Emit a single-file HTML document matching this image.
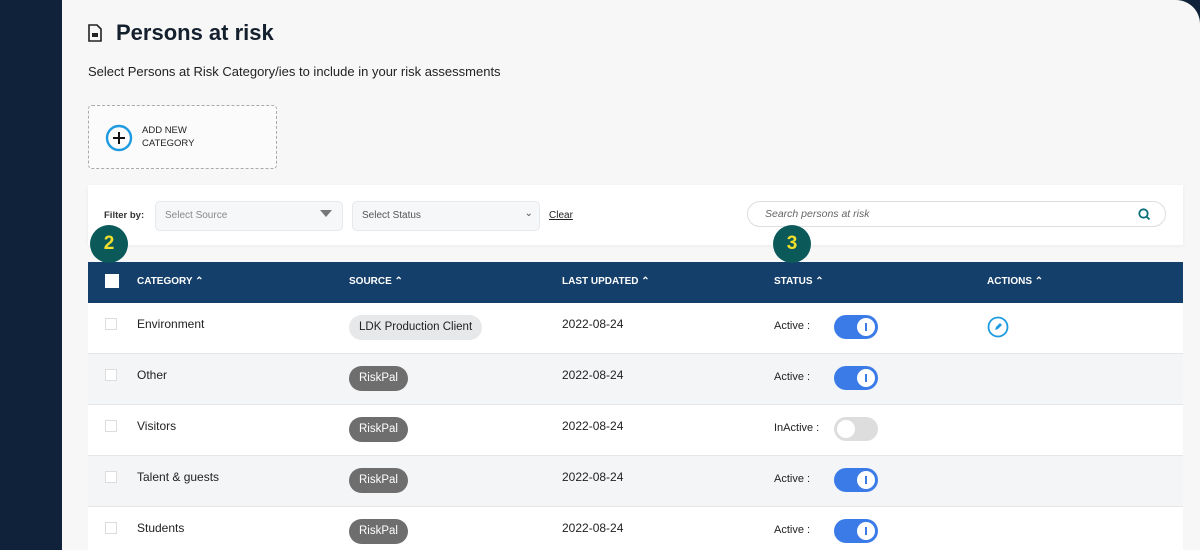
<!DOCTYPE html>
<html style="overflow:hidden;height:550px"><head><style>
*{box-sizing:border-box;margin:0;padding:0}
html,body{width:1200px;height:550px;overflow:hidden}
body{background:#0f2239;font-family:"Liberation Sans",sans-serif;position:relative}
.main{position:absolute;left:62px;top:0;width:1138px;height:550px;background:#f7f7f7;border-radius:0 24px 0 0;overflow:hidden}
.abs{position:absolute}
h1{position:absolute;left:116px;top:20px;font-size:22px;font-weight:bold;color:#14202e}
.sub{left:88px;top:64px;font-size:13px;color:#222}
.add{left:88px;top:105px;width:189px;height:64px;border:1px dashed #aaa;border-radius:4px;background:#fbfbfb}
.filter{left:88px;top:185px;width:1095px;height:60px;background:#fff;box-shadow:0 1px 4px rgba(0,0,0,.05)}
.sel{position:absolute;top:16px;height:30px;border:1px solid #e6e8eb;border-radius:5px;background:#f6f7f9;font-size:10px;color:#888;padding:8px 9px}
.table{left:88px;top:262px;width:1095px;height:288px;background:#fff;overflow:hidden}
.th{position:absolute;top:0;left:0;width:1095px;height:41px;background:#143f6a}
.th span{position:absolute;top:14px;font-size:10px;font-weight:bold;color:#fff}
.row{position:absolute;left:0;width:1095px;height:51px;border-bottom:1px solid #e6e6e6}
.row .c{position:absolute;top:14px;font-size:12px;color:#222}
.cb{position:absolute;left:17px;top:15px;width:12px;height:12px;border:1px solid #ddd;background:#fff}
.pill{position:absolute;left:261px;top:12px;height:25px;border-radius:13px;background:#6e6e6e;color:#fff;font-size:11.5px;padding:6px 10px}
.tg{position:absolute;left:746px;top:12px;width:44px;height:24px;border-radius:12px;background:#3b7be8}
.tg i{position:absolute;right:3px;top:3px;width:18px;height:18px;border-radius:50%;background:#fff}
.tg i:after{content:"";position:absolute;left:8px;top:5px;width:2px;height:8px;background:#3b7be8}
.tg.off i:after{display:none}
.badge{width:38px;height:38px;border-radius:50%;background:#0b5a59;color:#f3df2c;font-weight:bold;font-size:19px;text-align:center;line-height:38px}
</style></head><body>
<div class="main"></div>
<svg class="abs" style="left:87px;top:24px" width="16" height="18" viewBox="0 0 16 18"><path d="M2 1h8l4 4v12H2z" fill="none" stroke="#222" stroke-width="1.6"/><rect x="5" y="9" width="6" height="4" fill="#222"/></svg>
<h1>Persons at risk</h1>
<div class="abs sub">Select Persons at Risk Category/ies to include in your risk assessments</div>
<div class="abs add">
<svg class="abs" style="left:16px;top:18px" width="28" height="28"><circle cx="14" cy="14" r="12" fill="none" stroke="#1e9be0" stroke-width="2.4"/><path d="M14 8v12M8 14h12" stroke="#111" stroke-width="2"/></svg>
<div class="abs" style="left:53px;top:18px;font-size:9.5px;line-height:13px;color:#222">ADD NEW<br>CATEGORY</div>
</div>
<div class="abs filter">
<div class="abs" style="left:16px;top:25px;font-size:9.5px;color:#333;font-weight:bold">Filter by:</div>
<div class="sel" style="left:67px;width:188px">Select Source<span style="position:absolute;right:10px;top:8px;border:6px solid transparent;border-top:7px solid #777;border-bottom:0"></span></div>
<div class="sel" style="left:264px;width:188px;color:#555">Select Status<span style="position:absolute;right:6px;top:6px;font-size:10px">⌄</span></div>
<div class="abs" style="left:461px;top:25px;font-size:10px;color:#222;text-decoration:underline">Clear</div>
<div class="abs" style="left:659px;top:16px;width:419px;height:26px;border:1px solid #ddd;border-radius:13px;font-size:10.5px;font-style:italic;color:#666;padding:6px 17px">Search persons at risk
<svg class="abs" style="right:14px;top:6px" width="13" height="13"><circle cx="5.5" cy="5.5" r="4.2" fill="none" stroke="#0b6f7a" stroke-width="1.8"/><path d="M8.5 8.5l3 3" stroke="#0b6f7a" stroke-width="1.8"/></svg></div>
</div>
<div class="abs table">
<div class="th"><div style="position:absolute;left:17px;top:12px;width:14px;height:14px;background:#fff"></div>
<span style="left:49px">CATEGORY ⌃</span><span style="left:261px">SOURCE ⌃</span><span style="left:474px">LAST UPDATED ⌃</span><span style="left:686px">STATUS ⌃</span><span style="left:899px">ACTIONS ⌃</span></div>
<div class="row" style="top:41px;background:#fff"><div class="cb"></div><div class="c" style="left:49px">Environment</div><div class="pill" style="background:#e7e8ea;color:#222">LDK Production Client</div><div class="c" style="left:474px">2022-08-24</div><div class="c" style="left:686px;top:17px;font-size:11px">Active :</div><div class="tg"><i></i></div>
<svg class="abs" style="left:899px;top:13px" width="22" height="22"><circle cx="11" cy="11" r="9.5" fill="none" stroke="#1e9be0" stroke-width="1.8"/><path d="M8 14l1-3 4-4 2 2-4 4z" fill="#1e9be0"/></svg></div>
<div class="row" style="top:92px;background:#f4f5f7"><div class="cb"></div><div class="c" style="left:49px">Other</div><div class="pill">RiskPal</div><div class="c" style="left:474px">2022-08-24</div><div class="c" style="left:686px;top:17px;font-size:11px">Active :</div><div class="tg"><i></i></div></div>
<div class="row" style="top:143px;background:#fff"><div class="cb"></div><div class="c" style="left:49px">Visitors</div><div class="pill">RiskPal</div><div class="c" style="left:474px">2022-08-24</div><div class="c" style="left:686px;top:17px;font-size:11px">InActive :</div><div class="tg off" style="background:#ddd"><i style="left:3px"></i></div></div>
<div class="row" style="top:194px;background:#f4f5f7"><div class="cb"></div><div class="c" style="left:49px">Talent &amp; guests</div><div class="pill">RiskPal</div><div class="c" style="left:474px">2022-08-24</div><div class="c" style="left:686px;top:17px;font-size:11px">Active :</div><div class="tg"><i></i></div></div>
<div class="row" style="top:245px;background:#fff"><div class="cb"></div><div class="c" style="left:49px">Students</div><div class="pill">RiskPal</div><div class="c" style="left:474px">2022-08-24</div><div class="c" style="left:686px;top:17px;font-size:11px">Active :</div><div class="tg"><i></i></div></div>
</div>
<div class="abs badge" style="left:90px;top:225px">2</div>
<div class="abs badge" style="left:773px;top:225px">3</div>
</body></html>
